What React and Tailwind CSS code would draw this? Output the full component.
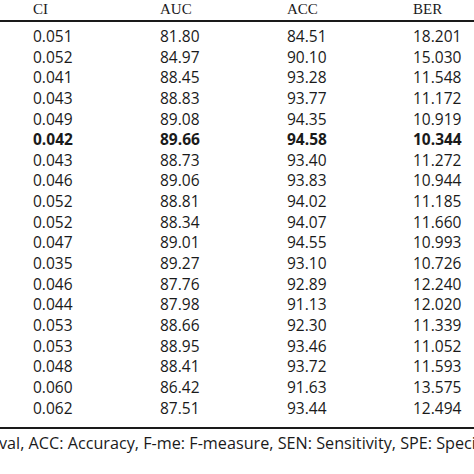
const rows = [
  ['0.051', '81.80', '84.51', '18.201'],
  ['0.052', '84.97', '90.10', '15.030'],
  ['0.041', '88.45', '93.28', '11.548'],
  ['0.043', '88.83', '93.77', '11.172'],
  ['0.049', '89.08', '94.35', '10.919'],
  ['0.042', '89.66', '94.58', '10.344', true],
  ['0.043', '88.73', '93.40', '11.272'],
  ['0.046', '89.06', '93.83', '10.944'],
  ['0.052', '88.81', '94.02', '11.185'],
  ['0.052', '88.34', '94.07', '11.660'],
  ['0.047', '89.01', '94.55', '10.993'],
  ['0.035', '89.27', '93.10', '10.726'],
  ['0.046', '87.76', '92.89', '12.240'],
  ['0.044', '87.98', '91.13', '12.020'],
  ['0.053', '88.66', '92.30', '11.339'],
  ['0.053', '88.95', '93.46', '11.052'],
  ['0.048', '88.41', '93.72', '11.593'],
  ['0.060', '86.42', '91.63', '13.575'],
  ['0.062', '87.51', '93.44', '12.494'],
];

const cols = 'grid grid-cols-[127px_127px_126px_1fr] pl-[33px]';

export default function App() {
  return (
    <div className="w-[474px] h-[474px] overflow-hidden bg-white text-[#1a1a1a]">
      <div className={`${cols} h-[20px] text-[15px] leading-[18px] font-['Liberation_Serif',serif]`}>
        <div>CI</div>
        <div>AUC</div>
        <div>ACC</div>
        <div>BER</div>
      </div>
      <div className="h-[2px] bg-[#1a1a1a]" />
      <div className="pt-[4px] pb-[9px] font-['Open_Sans',sans-serif] text-[15.5px] leading-[20.64px]">
        {rows.map((r, i) => (
          <div key={i} className={`${cols} ${r[4] ? 'font-bold' : ''}`}>
            <div>{r[0]}</div>
            <div>{r[1]}</div>
            <div>{r[2]}</div>
            <div>{r[3]}</div>
          </div>
        ))}
      </div>
      <div className="h-[2px] bg-[#1a1a1a]" />
      <div className="pt-[4px] ml-[-1px] whitespace-nowrap font-['Open_Sans',sans-serif] text-[16.2px] leading-[20px]">
        val, ACC: Accuracy, F-me: F-measure, SEN: Sensitivity, SPE: Specificity
      </div>
    </div>
  );
}
